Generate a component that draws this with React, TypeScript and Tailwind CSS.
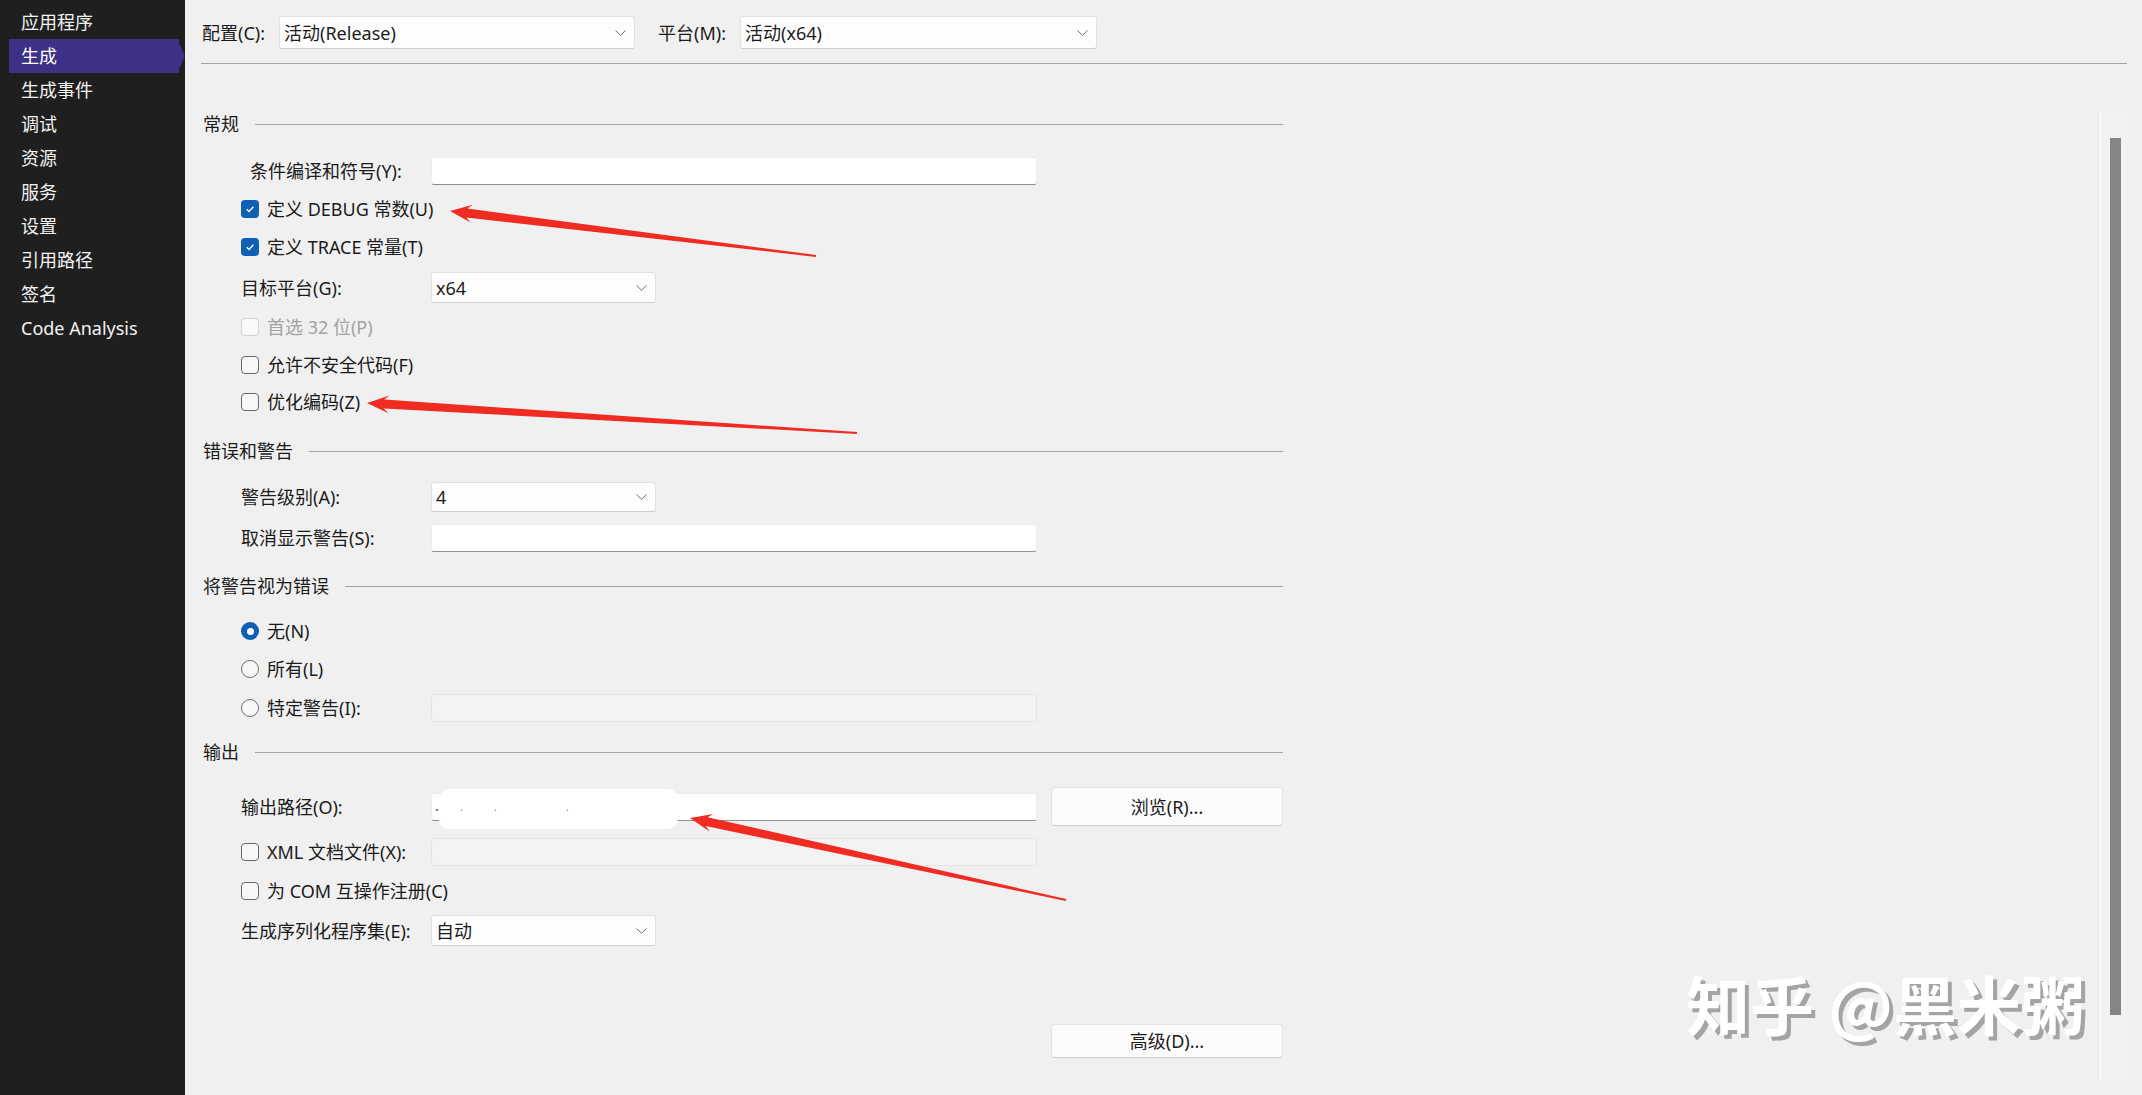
import React from "react";

const FONT = "font-['Noto_Sans','Noto_Sans_CJK_SC',sans-serif]";

function Chevron() {
  return (
    <svg width="11" height="6" viewBox="0 0 11 6" className="shrink-0">
      <path d="M0.5 0.5 L5.5 5.3 L10.5 0.5" fill="none" stroke="#707070" strokeWidth="1" />
    </svg>
  );
}

function Select({ value, w, h }: { value: string; w: string; h: string }) {
  return (
    <div
      className={`${w} ${h} flex items-center justify-between bg-[#fdfdfd] border border-[#e2e2e2] border-b-[#cdcdcd] rounded-[3px] pl-[4px] pr-[8px]`}
    >
      <span className="text-[18px] leading-[24px] text-[#1b1b1b]">{value}</span>
      <Chevron />
    </div>
  );
}

function TextBox({ disabled, children }: { disabled?: boolean; children?: React.ReactNode }) {
  return disabled ? (
    <div className="relative w-[606px] h-[28px] bg-[#f3f3f3] border border-[#e4e4e4] rounded-[3px]" />
  ) : (
    <div className="relative w-[606px] h-[28px] bg-white border border-[#ececec] border-b-[#8f8f8f] rounded-[3px]">
      {children}
    </div>
  );
}

function Checkbox({ checked, disabled }: { checked?: boolean; disabled?: boolean }) {
  if (checked)
    return (
      <span className="w-[18px] h-[18px] rounded-[4px] bg-[#0f5fb4] flex items-center justify-center shrink-0">
        <svg width="12" height="12" viewBox="0 0 12 12">
          <path d="M2.8 6.2 L5 8.5 L9.4 3.7" fill="none" stroke="white" strokeWidth="1.3" />
        </svg>
      </span>
    );
  return (
    <span
      className={`w-[18px] h-[18px] rounded-[4px] border shrink-0 ${
        disabled ? "border-[#d2d2d2] bg-[#fafafa]" : "border-[#6a6a6a] bg-[#f7f7f7]"
      }`}
    />
  );
}

function Radio({ checked }: { checked?: boolean }) {
  if (checked)
    return (
      <span className="w-[18px] h-[18px] rounded-full bg-[#0f5fb4] flex items-center justify-center shrink-0">
        <span className="w-[7px] h-[7px] rounded-full bg-white" />
      </span>
    );
  return <span className="w-[18px] h-[18px] rounded-full border border-[#6f6f6f] bg-[#f7f7f7] shrink-0" />;
}

function SectionHeader({ title, mt }: { title: string; mt: string }) {
  return (
    <div className={`flex items-center h-[26px] ${mt}`}>
      <span className="pl-[2px] text-[18px] leading-[24px] text-[#1b1b1b] whitespace-nowrap">{title}</span>
      <div className="ml-[16px] flex-1 h-px bg-[#a3a3a3]" />
    </div>
  );
}

function CheckRow({
  label,
  checked,
  disabled,
  mt,
  radio,
}: {
  label: string;
  checked?: boolean;
  disabled?: boolean;
  mt: string;
  radio?: boolean;
}) {
  return (
    <div className={`flex items-center h-[28px] pl-[40px] ${mt}`}>
      {radio ? <Radio checked={checked} /> : <Checkbox checked={checked} disabled={disabled} />}
      <span
        className={`ml-[8px] text-[18px] leading-[24px] whitespace-nowrap ${
          disabled ? "text-[#a2a2a2]" : "text-[#1b1b1b]"
        }`}
      >
        {label}
      </span>
    </div>
  );
}

function Label({ children, extra }: { children: React.ReactNode; extra?: string }) {
  return (
    <div className={`w-[190px] shrink-0 flex items-center text-[18px] leading-[24px] text-[#1b1b1b] whitespace-nowrap ${extra ?? ""}`}>
      {children}
    </div>
  );
}

function Button({ label, h }: { label: string; h: string }) {
  return (
    <div
      className={`w-[232px] ${h} flex items-center justify-center bg-[#fbfbfb] border border-[#e3e3e3] border-b-[#cccccc] rounded-[4px] text-[18px] leading-[24px] text-[#1b1b1b]`}
    >
      {label}
    </div>
  );
}

function arrowPoints(tx: number, ty: number, sx: number, sy: number) {
  const dx = tx - sx;
  const dy = ty - sy;
  const len = Math.hypot(dx, dy);
  const ux = dx / len;
  const uy = dy / len;
  const nx = -uy;
  const ny = ux;
  const p = (a: number, b: number) => `${(tx - ux * a + nx * b).toFixed(1)},${(ty - uy * a + ny * b).toFixed(1)}`;
  return [p(0, 0), p(22, 9), p(17, 4.5), p(len, 0.9), p(len, -0.9), p(17, -4.5), p(22, -9)].join(" ");
}

const ARROWS: [number, number, number, number][] = [
  [450, 211, 816, 256],
  [367, 403, 857, 433],
  [690, 818, 1066, 900],
];

const NAV = ["应用程序", "生成", "生成事件", "调试", "资源", "服务", "设置", "引用路径", "签名", "Code Analysis"];

export default function App() {
  return (
    <div className={`relative flex w-[2142px] h-[1095px] overflow-hidden bg-[#f0f0f0] ${FONT}`}>
      {/* Sidebar */}
      <aside className="w-[185px] shrink-0 bg-[#1f1f1f] pt-[5px]">
        {NAV.map((item) => {
          const active = item === "生成";
          return (
            <div
              key={item}
              className={`relative ml-[9px] w-[170px] h-[34px] flex items-center pl-[12px] text-[18px] leading-[24px] ${
                active ? "bg-[#3d3087] text-white" : "text-[#f2f2f2]"
              }`}
            >
              {item}
              {active && (
                <svg className="absolute right-[-6px] top-[4px]" width="6" height="26" viewBox="0 0 6 26">
                  <polygon points="0,0 6,13 0,26" fill="#3d3087" />
                </svg>
              )}
            </div>
          );
        })}
      </aside>

      {/* Main */}
      <main className="flex-1 flex flex-col">
        <div className="ml-[16px] mr-[15px] pt-[16px] pb-[14px] border-b border-[#a3a3a3] flex items-center">
          <span className="w-[78px] pl-[1px] text-[18px] leading-[24px] text-[#1b1b1b] whitespace-nowrap">配置(C):</span>
          <Select value="活动(Release)" w="w-[356px]" h="h-[33px]" />
          <span className="ml-[23px] w-[82px] text-[18px] leading-[24px] text-[#1b1b1b] whitespace-nowrap">平台(M):</span>
          <Select value="活动(x64)" w="w-[357px]" h="h-[33px]" />
        </div>

        <div className="flex flex-1">
          <div className="ml-[16px] w-[1082px] flex flex-col">
            <SectionHeader title="常规" mt="mt-[47px]" />
            <div className="flex items-center h-[28px] pl-[40px] mt-[20px]">
              <Label extra="pl-[9px]">条件编译和符号(Y):</Label>
              <TextBox />
            </div>
            <CheckRow label="定义 DEBUG 常数(U)" checked mt="mt-[10px]" />
            <CheckRow label="定义 TRACE 常量(T)" checked mt="mt-[10px]" />
            <div className="flex items-center h-[31px] pl-[40px] mt-[11px]">
              <Label>目标平台(G):</Label>
              <Select value="x64" w="w-[225px]" h="h-[31px]" />
            </div>
            <CheckRow label="首选 32 位(P)" disabled mt="mt-[10px]" />
            <CheckRow label="允许不安全代码(F)" mt="mt-[10px]" />
            <CheckRow label="优化编码(Z)" mt="mt-[9px]" />

            <SectionHeader title="错误和警告" mt="mt-[22px]" />
            <div className="flex items-center h-[30px] pl-[40px] mt-[18px]">
              <Label>警告级别(A):</Label>
              <Select value="4" w="w-[225px]" h="h-[30px]" />
            </div>
            <div className="flex items-center h-[28px] pl-[40px] mt-[12px]">
              <Label>取消显示警告(S):</Label>
              <TextBox />
            </div>

            <SectionHeader title="将警告视为错误" mt="mt-[21px]" />
            <CheckRow label="无(N)" radio checked mt="mt-[18px]" />
            <CheckRow label="所有(L)" radio mt="mt-[10px]" />
            <div className="flex items-center h-[28px] pl-[40px] mt-[11px]">
              <Label>
                <Radio />
                <span className="ml-[8px]">特定警告(I):</span>
              </Label>
              <TextBox disabled />
            </div>

            <SectionHeader title="输出" mt="mt-[17px]" />
            <div className="flex items-center h-[39px] pl-[40px] mt-[22px]">
              <Label>输出路径(O):</Label>
              <TextBox>
                <span className="absolute left-[3px] top-[1px] text-[14px] text-[#444]">.</span>
                <div className="absolute left-[7px] top-[-5px] w-[239px] h-[40px] bg-white rounded-[10px]" />
                <span className="absolute left-[28px] top-[6px] text-[10px] text-[#777]">.</span>
                <span className="absolute left-[62px] top-[6px] text-[10px] text-[#777]">.</span>
                <span className="absolute left-[134px] top-[6px] text-[10px] text-[#777]">.</span>
              </TextBox>
              <div className="ml-[14px]">
                <Button label="浏览(R)..." h="h-[39px]" />
              </div>
            </div>
            <div className="flex items-center h-[28px] pl-[40px] mt-[12px]">
              <Label>
                <Checkbox />
                <span className="ml-[8px]">XML 文档文件(X):</span>
              </Label>
              <TextBox disabled />
            </div>
            <CheckRow label="为 COM 互操作注册(C)" mt="mt-[11px]" />
            <div className="flex items-center h-[31px] pl-[40px] mt-[10px]">
              <Label>生成序列化程序集(E):</Label>
              <Select value="自动" w="w-[225px]" h="h-[31px]" />
            </div>
            <div className="flex justify-end mt-[78px]">
              <Button label="高级(D)..." h="h-[34px]" />
            </div>
          </div>

          <div className="flex-1" />

          {/* Scrollbar */}
          <div className="mr-[15px] mt-[48px] w-[27px] h-[968px] border-l border-white bg-[#f2f2f2]">
            <div className="ml-[9px] mt-[26px] w-[11px] h-[877px] bg-[#858585]" />
          </div>
        </div>
      </main>

      {/* Annotation arrows */}
      <svg className="pointer-events-none absolute left-0 top-0" width="2142" height="1095">
        {ARROWS.map(([tx, ty, sx, sy], i) => (
          <polygon key={i} points={arrowPoints(tx, ty, sx, sy)} fill="#ef2b22" />
        ))}
      </svg>

      {/* Watermark */}
      <div className="pointer-events-none absolute left-[1686px] top-[962px] text-[64px] leading-[80px] font-bold text-white whitespace-nowrap [text-shadow:4px_4px_0_#a4a4a4] font-['Noto_Sans_CJK_SC',sans-serif]">
        知乎 @黑米粥
      </div>
    </div>
  );
}
